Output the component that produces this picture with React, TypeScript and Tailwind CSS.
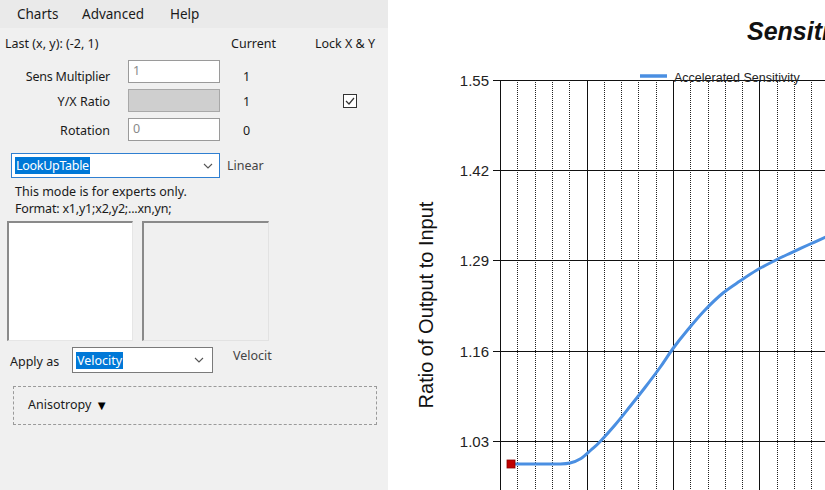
import React from "react";

const ui = { fontFamily: '"Noto Sans", "Liberation Sans", sans-serif' };

function Chevron() {
  return (
    <svg width="10" height="6" viewBox="0 0 10 6" className="shrink-0">
      <path d="M1 1 L5 5 L9 1" fill="none" stroke="#555" strokeWidth="1.1" />
    </svg>
  );
}

function TextBox({ value, disabled }: { value: string; disabled?: boolean }) {
  return (
    <div
      className={`w-[92px] h-[23px] border flex items-center pl-[4px] text-[#8a8a8a] ${
        disabled ? "bg-[#cfcfcf] border-[#a8a8a8]" : "bg-white border-[#9a9a9a]"
      }`}
    >
      {value}
    </div>
  );
}

function ControlPanel() {
  return (
    <div className="w-[388px] h-[490px] shrink-0 bg-[#f0f0f0] text-[12.5px] text-[#1a1a1a] flex flex-col" style={ui}>
      {/* menu strip */}
      <div className="h-[28px] bg-[#eaeaea] flex items-center pl-[17px] text-[13.5px]">
        <span className="w-[65px]">Charts</span>
        <span className="w-[88px]">Advanced</span>
        <span>Help</span>
      </div>

      <div className="h-[30px] flex items-center pt-[2px]">
        <span className="w-[231px] pl-[5px]">Last (x, y): (-2, 1)</span>
        <span className="w-[84px]">Current</span>
        <span>Lock X &amp; Y</span>
      </div>

      <div className="mt-[2px] flex flex-col gap-[6px]">
        <div className="h-[23px] flex items-center">
          <span className="w-[110px] text-right pt-[12px] tracking-[-0.2px]">Sens Multiplier</span>
          <div className="ml-[18px]"><TextBox value="1" /></div>
          <span className="pl-[23px] pt-[12px]">1</span>
        </div>
        <div className="h-[23px] flex items-center">
          <span className="w-[110px] text-right pt-[4px]">Y/X Ratio</span>
          <div className="ml-[18px]"><TextBox value="" disabled /></div>
          <span className="pl-[23px] w-[123px] pt-[4px]">1</span>
          <div className="w-[14px] h-[14px] border border-[#333] bg-white flex items-center justify-center">
            <svg width="10" height="8" viewBox="0 0 10 8">
              <path d="M1 4 L4 7 L9 1" fill="none" stroke="#333" strokeWidth="1.2" />
            </svg>
          </div>
        </div>
        <div className="h-[23px] flex items-center">
          <span className="w-[110px] text-right pt-[3px]">Rotation</span>
          <div className="ml-[18px]"><TextBox value="0" /></div>
          <span className="pl-[23px] pt-[3px]">0</span>
        </div>
      </div>

      {/* mode combo */}
      <div className="mt-[12px] flex items-center">
        <div className="ml-[11px] w-[209px] h-[25px] bg-white border border-[#2f7fd1] flex items-center pl-[3px] pr-[6px]">
          <span className="bg-[#0078d7] text-white leading-[17px] px-[1px] tracking-[-0.3px]">LookUpTable</span>
          <span className="flex-1" />
          <Chevron />
        </div>
        <span className="ml-[7px] text-[#444] pt-[2px]">Linear</span>
      </div>

      <div className="mt-[5px] pl-[15px] leading-[17px]">
        <div>This mode is for experts only.</div>
        <div className="tracking-[-0.2px]">Format: x1,y1;x2,y2;...xn,yn;</div>
      </div>

      <div className="mt-[4px] flex">
        <div className="ml-[7px] w-[126px] h-[120px] bg-white border-t-2 border-l-2 border-[#8a8a8a] border-r border-b border-r-[#e6e6e6] border-b-[#e6e6e6]" />
        <div className="ml-[9px] w-[127px] h-[120px] bg-[#f0f0f0] border-t-2 border-l-2 border-[#8a8a8a] border-r border-b border-r-[#e2e2e2] border-b-[#e2e2e2]" />
      </div>

      <div className="mt-[6px] flex">
        <span className="w-[72px] pl-[10px] h-[26px] flex items-center mt-[2px]">Apply as</span>
        <div className="w-[141px] h-[26px] bg-white border border-[#7a7a7a] flex items-center pl-[3px] pr-[8px]">
          <span className="bg-[#0078d7] text-white leading-[17px] px-[1px]">Velocity</span>
          <span className="flex-1" />
          <Chevron />
        </div>
        <span className="ml-[20px] text-[#444] leading-[17px]">Velocit</span>
      </div>

      <div className="mt-[11px] ml-[13px] w-[364px] h-[39px] border border-dashed border-[#9a9a9a] flex items-center pl-[14px]">
        Anisotropy <span className="ml-[4px] text-[13px] text-black">▼</span>
      </div>
    </div>
  );
}

const hLines = [80.5, 170.5, 260.5, 351.5, 441.5];
const yLabels = ["1.55", "1.42", "1.29", "1.16", "1.03"];
const majors = [500.5, 587.5, 673.5, 759.5];
const minors: number[] = [];
for (let m = 0; m < 4; m++) {
  for (let k = 1; k < 5; k++) {
    const x = Math.round(500 + 86.5 * m + 17.3 * k) + 0.5;
    if (x < 825) minors.push(x);
  }
}

const curve: [number, number][] = [
  [511, 464], [535, 464], [558, 464], [570, 463], [581, 458.5], [591, 450], [600, 441.7],
  [615, 425], [630, 406.5], [645, 387.5], [660, 367.5], [673, 348.5], [688, 329.5],
  [705, 310], [723, 293], [740, 281], [757, 270], [775, 260.5], [790, 253.3],
  [808, 245], [826, 237],
];

// catmull-rom through the points, as cubic beziers
function smoothPath(pts: [number, number][]) {
  let d = `M${pts[0][0]},${pts[0][1]}`;
  for (let i = 0; i < pts.length - 1; i++) {
    const p0 = pts[i - 1] || pts[i];
    const p1 = pts[i];
    const p2 = pts[i + 1];
    const p3 = pts[i + 2] || p2;
    const c1x = p1[0] + (p2[0] - p0[0]) / 6;
    const c1y = p1[1] + (p2[1] - p0[1]) / 6;
    const c2x = p2[0] - (p3[0] - p1[0]) / 6;
    const c2y = p2[1] - (p3[1] - p1[1]) / 6;
    d += ` C${c1x},${c1y} ${c2x},${c2y} ${p2[0]},${p2[1]}`;
  }
  return d;
}

function Chart() {
  return (
    <div className="flex-1 h-[490px] bg-white overflow-hidden">
      <svg width="437" height="490" viewBox="388 0 437 490" style={{ fontFamily: '"Liberation Sans", Arial, sans-serif' }}>
        <text x="747" y="40" fontSize="25" fontWeight="bold" fontStyle="italic" fill="#111">
          Sensitivity
        </text>
        {minors.map((x) => (
          <line key={x} x1={x} y1={80} x2={x} y2={490} stroke="#222" strokeWidth="1" strokeDasharray="1 1" />
        ))}
        {majors.map((x) => (
          <line key={x} x1={x} y1={80} x2={x} y2={490} stroke="#111" strokeWidth="1" />
        ))}
        {hLines.map((y, i) => (
          <g key={y}>
            <line x1={493} y1={y} x2={825} y2={y} stroke="#111" strokeWidth="1" />
            <text x="489" y={y + 5.5} fontSize="15" textAnchor="end" fill="#222">
              {yLabels[i]}
            </text>
          </g>
        ))}
        <text transform="translate(433 305) rotate(-90)" fontSize="20" textAnchor="middle" fill="#111">
          Ratio of Output to Input
        </text>
        <line x1="640" y1="76" x2="667" y2="76" stroke="#4a8fe2" strokeWidth="3.5" />
        <text x="674" y="81.5" fontSize="12.5" fill="#222">
          Accelerated Sensitivity
        </text>
        <path d={smoothPath(curve)} fill="none" stroke="#4a8fe2" strokeWidth="3" strokeLinecap="round" />
        <rect x="507" y="460" width="8" height="8" fill="#c00000" stroke="#8a0000" strokeWidth="0.8" />
      </svg>
    </div>
  );
}

export default function App() {
  return (
    <div className="w-[825px] h-[490px] flex overflow-hidden">
      <ControlPanel />
      <Chart />
    </div>
  );
}
